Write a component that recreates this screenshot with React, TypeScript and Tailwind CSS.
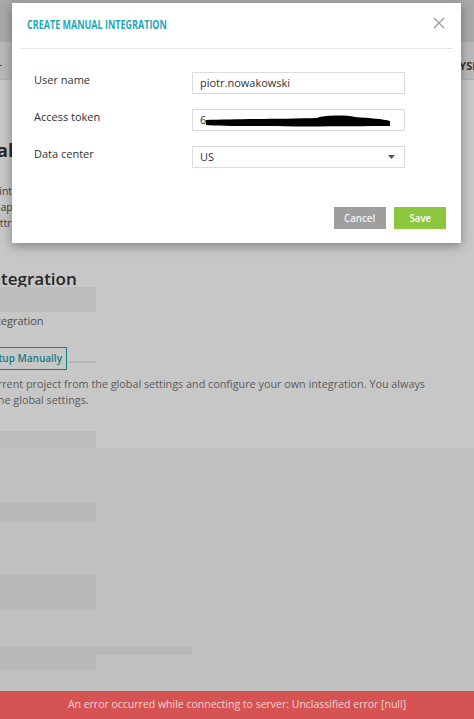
import React from "react";

const font = { fontFamily: '"Open Sans", "Liberation Sans", sans-serif' };

export default function App() {
  return (
    <div
      className="relative w-[474px] h-[719px] overflow-hidden bg-white"
      style={font}
    >
      {/* Page underneath */}
      <div className="flex flex-col h-full">
        <div className="h-[42px] bg-[#d8d8d8] shrink-0" />
        <div className="h-[38px] bg-[#ececec] border-b border-[#e0e0e0] shrink-0 flex items-end justify-between pb-[5px]">
          <span className="text-[12px] text-[#555] -ml-[2px]">-</span>
          <span className="text-[11px] font-bold text-[#444] -mr-[8px] whitespace-nowrap">ANALYSIS</span>
        </div>

        <div className="flex-1 bg-white flex flex-col">
          <div className="h-[368px] shrink-0 flex flex-col">
            <div className="pt-[59px] -ml-[44px] text-[18px] font-bold text-[#333] leading-[22px] whitespace-nowrap">
              Global
            </div>
            <div className="mt-[22px] text-[10.5px] text-[#555] leading-[16px] whitespace-nowrap">
              <div className="-ml-[16px]">Maint</div>
              <div className="-ml-[9px]">Map</div>
              <div className="-ml-[7px]">Attri</div>
            </div>
            <div className="mt-[37px] -ml-[15px] text-[17px] font-semibold text-[#333] leading-[22px] whitespace-nowrap">
              Integration
            </div>
            <div className="mt-[-3px] w-[96px] h-[25px] bg-[#f2f2f2]" />
            <div className="mt-[1px] -ml-[13px] text-[11px] text-[#666] leading-[16px] whitespace-nowrap">
              Integration
            </div>
            <div className="mt-[18px] flex items-center">
              <div className="-ml-[24px] h-[23px] w-[91px] border border-[#17a2a8] flex items-center justify-end pr-[4px] text-[10px] font-semibold text-[#17a2a8] bg-white whitespace-nowrap">
                Setup Manually
              </div>
              <div className="mt-[6px] h-[2px] w-[29px] bg-[#eeeeee]" />
            </div>
            <div className="mt-[6px] -ml-[14px] text-[10.8px] text-[#777] leading-[16px] whitespace-nowrap">
              current project from the global settings and configure your own integration. You always
            </div>
            <div className="-ml-[6px] text-[10.8px] text-[#777] leading-[16px] whitespace-nowrap">
              the global settings.
            </div>
            <div className="mt-[23px] w-[96px] h-[17px] bg-[#f2f2f2]" />
          </div>

          <div className="flex-1 bg-[#f7f7f7] flex flex-col">
            <div className="mt-[55px] w-[96px] h-[19px] bg-[#ececec]" />
            <div className="mt-[53px] w-[96px] h-[35px] bg-[#ececec]" />
            <div className="mt-[37px] flex flex-col">
              <div className="w-[192px] h-[8px] bg-[#ececec]" />
              <div className="w-[96px] h-[15px] bg-[#ececec]" />
            </div>
          </div>
        </div>
      </div>

      {/* Overlay */}
      <div className="absolute inset-0 bg-black/[0.22]" />

      {/* Error bar */}
      <div className="absolute left-0 right-0 bottom-0 h-[28px] bg-[#d55353] flex items-center justify-center text-[10.5px] text-[#f6d2d2] whitespace-nowrap">
        An error occurred while connecting to server: Unclassified error [null]
      </div>

      {/* Modal */}
      <div className="absolute left-[12px] top-[3px] w-[449px] h-[240px] bg-white shadow-[0_3px_10px_rgba(0,0,0,0.35)] flex flex-col">
        <div className="h-[45px] flex items-center justify-between pl-[15px] pr-[16px] shrink-0">
          <span className="inline-block origin-left scale-x-[0.72] text-[12.5px] font-bold text-[#1ea8b5] whitespace-nowrap">
            CREATE MANUAL INTEGRATION
          </span>
          <svg width="12" height="12" viewBox="0 0 12 12" className="mt-[-5px]">
            <path d="M1 1 L11 11 M11 1 L1 11" stroke="#9a9a9a" strokeWidth="1.3" />
          </svg>
        </div>
        <div className="mx-[8px] h-px bg-[#e6e6e6]" />

        <div className="flex flex-col gap-[15px] pt-[23px] pl-[22px]">
          <div className="flex items-start">
            <div className="w-[158px] text-[11px] text-[#333] leading-[14px] pt-[1px]">User name</div>
            <div className="w-[213px] h-[22px] border border-[#dcdcdc] flex items-center pl-[7px] text-[11px] text-[#333]">
              piotr.nowakowski
            </div>
          </div>
          <div className="flex items-start">
            <div className="w-[158px] text-[11px] text-[#333] leading-[14px] pt-[1px]">Access token</div>
            <div className="relative w-[213px] h-[22px] border border-[#dcdcdc] flex items-center pl-[7px] text-[11px] text-[#333]">
              6
              <svg
                className="absolute left-[12px] top-[3px]"
                width="186"
                height="16"
                viewBox="0 0 186 16"
              >
                <path
                  d="M1 7 C 30 6, 80 6, 112 5 C 120 2, 140 2, 150 4 C 165 5, 178 6, 185 8 L 185 13 C 150 13, 100 14, 60 13 C 30 13, 10 13, 1 12 Z"
                  fill="#000"
                />
              </svg>
            </div>
          </div>
          <div className="flex items-start">
            <div className="w-[158px] text-[11px] text-[#333] leading-[14px] pt-[1px]">Data center</div>
            <div className="w-[213px] h-[22px] border border-[#dcdcdc] flex items-center justify-between pl-[7px] pr-[9px] text-[11px] text-[#333]">
              <span>US</span>
              <svg width="7" height="4" viewBox="0 0 7 4">
                <path d="M0 0 L7 0 L3.5 4 Z" fill="#555" />
              </svg>
            </div>
          </div>
        </div>

        <div className="flex justify-end gap-[8px] pr-[15px] mt-[39px]">
          <button className="w-[52px] h-[22px] bg-[#9e9e9e] text-[11px] font-semibold text-[#f0f0f0]">
            <span className="inline-block scale-x-[0.88]">Cancel</span>
          </button>
          <button className="w-[52px] h-[22px] bg-[#8dc63f] text-[11px] font-semibold text-white">
            <span className="inline-block scale-x-[0.88]">Save</span>
          </button>
        </div>
      </div>
    </div>
  );
}
